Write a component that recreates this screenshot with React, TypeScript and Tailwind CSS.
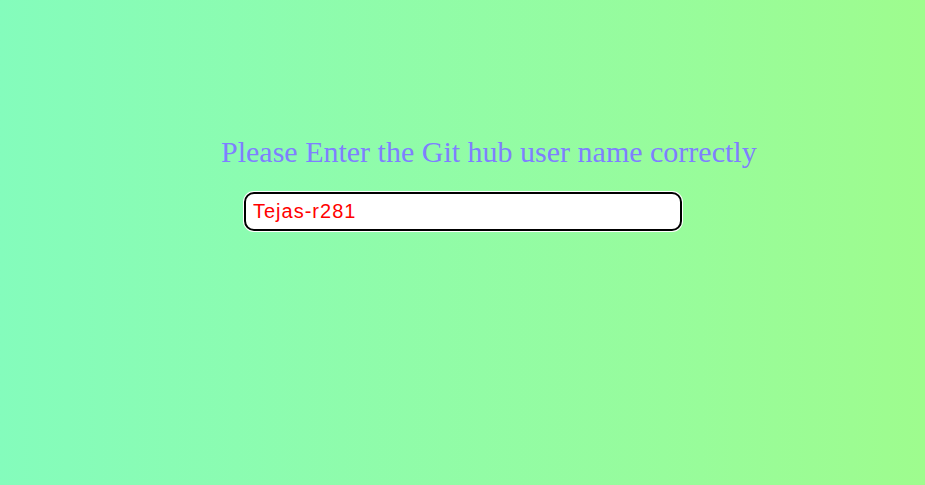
import { useState } from 'react';

export default function App() {
  const [user, setUser] = useState('Tejas-r281');

  return (
    <div className="min-h-[485px] w-full bg-gradient-to-r from-[#84fcbc] to-[#9efc8e]">
      <div className="flex flex-col pt-[135px]">
        <h1 className="ml-[221px] text-[30px] leading-[34px] text-[#7f7fff] font-['Liberation_Serif',serif]">
          Please Enter the Git hub user name correctly
        </h1>
        <div className="mt-[23px] ml-[244px]">
          <input
            value={user}
            onChange={(e) => setUser(e.target.value)}
            className="w-[438px] h-[39px] rounded-[10px] border-2 border-black bg-white px-[7px] text-[20px] tracking-[1px] text-[#ff0000] outline-none shadow-[0_0_0_1px_#ffffff] font-['Liberation_Sans',sans-serif]"
          />
        </div>
      </div>
    </div>
  );
}
